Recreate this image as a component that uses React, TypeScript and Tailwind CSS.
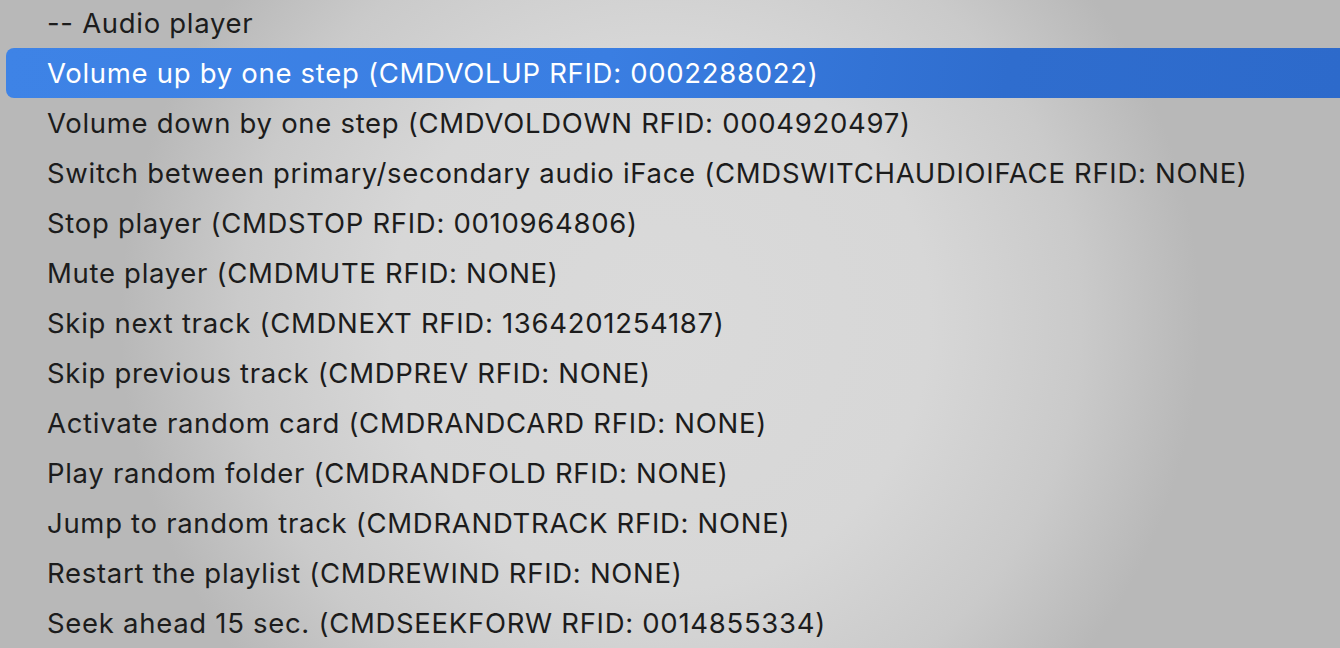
import React from "react";

type Item = { label: string; selected?: boolean };

const items: Item[] = [
  { label: "-- Audio player" },
  { label: "Volume up by one step (CMDVOLUP RFID: 0002288022)", selected: true },
  { label: "Volume down by one step (CMDVOLDOWN RFID: 0004920497)" },
  { label: "Switch between primary/secondary audio iFace (CMDSWITCHAUDIOIFACE RFID: NONE)" },
  { label: "Stop player (CMDSTOP RFID: 0010964806)" },
  { label: "Mute player (CMDMUTE RFID: NONE)" },
  { label: "Skip next track (CMDNEXT RFID: 1364201254187)" },
  { label: "Skip previous track (CMDPREV RFID: NONE)" },
  { label: "Activate random card (CMDRANDCARD RFID: NONE)" },
  { label: "Play random folder (CMDRANDFOLD RFID: NONE)" },
  { label: "Jump to random track (CMDRANDTRACK RFID: NONE)" },
  { label: "Restart the playlist (CMDREWIND RFID: NONE)" },
  { label: "Seek ahead 15 sec. (CMDSEEKFORW RFID: 0014855334)" },
];

export default function App() {
  return (
    <div
      className="w-[1340px] h-[648px] overflow-hidden bg-[#b8b8b8] bg-[radial-gradient(ellipse_540px_540px_at_660px_320px,#dadada_0%,#d7d7d7_50%,#cacaca_78%,#b8b8b8_100%)]"
      style={{ fontFamily: "Inter, 'Noto Sans', 'Liberation Sans', sans-serif" }}
    >
      <ul className="flex flex-col -mt-[2px] pl-[6px]">
        {items.map((it) => (
          <li
            key={it.label}
            className={
              it.selected
                ? "h-[50px] flex items-center pl-[41px] rounded-l-[8px] text-white bg-[linear-gradient(100deg,#3e83e6_0%,#3a7ee2_45%,#2f6dce_75%,#2d6acb_100%)]"
                : "h-[50px] flex items-center pl-[41px] text-[#1c1c1c]"
            }
          >
            <span className="text-[27.5px] leading-none tracking-[0.7px] pt-[1px]">{it.label}</span>
          </li>
        ))}
      </ul>
    </div>
  );
}
